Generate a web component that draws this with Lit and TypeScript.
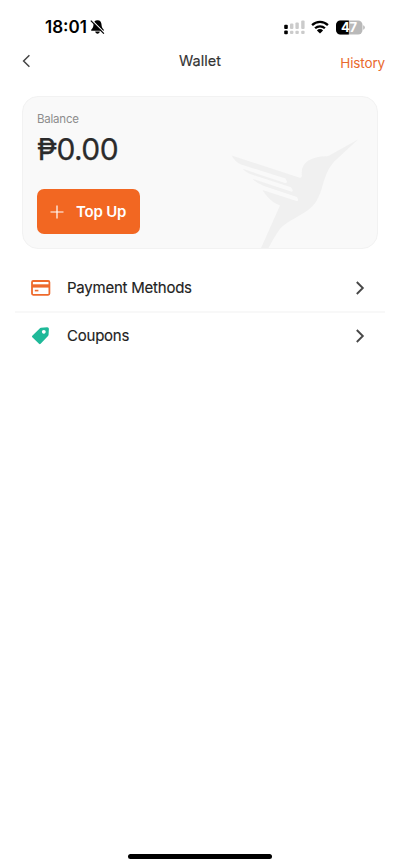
import { LitElement, html, css, svg } from "lit";
import { customElement, property } from "lit/decorators.js";

const cardIcon = svg`<svg width="20" height="16" viewBox="0 0 20 16">
  <rect x="1" y="1" width="17.4" height="13.8" rx="1.2" fill="none" stroke="#ee6a2c" stroke-width="1.8"/>
  <path d="M1 4.3H18.4V7.6H1Z" fill="#ee6a2c"/>
  <path d="M3.8 10.6H7.4" stroke="#ee6a2c" stroke-width="1.6"/>
</svg>`;

const tagIcon = svg`<svg width="20" height="18" viewBox="0 0 20 18">
  <path fill-rule="evenodd" fill="#1fb999" d="M10 .7 L16.2 .2 Q17.9 .2 17.9 1.8 L17.6 7.6 Q17.5 8.6 16.8 9.3 L9.6 16.8 Q8.8 17.5 8 16.8 L1.3 10.3 Q.5 9.5 1.3 8.7 L8.7 1.4 Q9.2 .8 10 .7Z M12.8 2.9 a1.9 1.9 0 1 0 .01 0Z"/>
</svg>`;

@customElement("status-bar")
class StatusBar extends LitElement {
  static styles = css`
    :host { display: flex; height: 44px; align-items: center; justify-content: space-between; padding: 10px 34px 0 45px; box-sizing: border-box; color: #000; }
    .left, .right { display: flex; align-items: center; }
    .time { font: 600 17px/20px Inter, sans-serif; letter-spacing: 0; width: 43px; white-space: nowrap; }
    .bell { margin-left: 2px; }
    .right { gap: 6px; }
    svg { display: block; }
    .level { font: 700 13px Inter, sans-serif; letter-spacing: -0.3px; }
  `;
  render() {
    return html`
      <div class="left">
        <span class="time">18:01</span>
        <svg class="bell" width="15" height="16" viewBox="0 0 15 16">
          <path d="M7.5 1.2C4.7 1.2 3.6 3.3 3.5 5.6C3.4 8.4 2.4 9.5 1.2 10.7V11.8H13.8V10.7C12.6 9.5 11.6 8.4 11.5 5.6C11.4 3.3 10.3 1.2 7.5 1.2Z" fill="#000"/>
          <path d="M5.2 12.6H9.8C9.5 14 8.7 14.7 7.5 14.7S5.5 14 5.2 12.6Z" fill="#000"/>
          <path d="M1.6 1L14.7 14" stroke="#fff" stroke-width="1.3"/>
          <path d="M.8 1.6L13.9 14.6" stroke="#000" stroke-width="1.2"/>
        </svg>
      </div>
      <div class="right">
        <svg width="21" height="15" viewBox="0 0 21 15">
          <g fill="#cbcbcb">
            <rect x="6" y="3.6" width="3.4" height="5.4" rx="1"/>
            <rect x="11.4" y="2.4" width="3.4" height="6.6" rx="1"/>
            <rect x="17.2" y=".6" width="3.4" height="8.4" rx="1"/>
            <rect x="6" y="10.8" width="3.4" height="3.2" rx="1"/>
            <rect x="11.4" y="10.8" width="3.4" height="3.2" rx="1"/>
            <rect x="17.2" y="10.8" width="3.4" height="3.2" rx="1"/>
          </g>
          <rect x=".2" y="4.8" width="3.6" height="4.2" rx="1"/>
          <rect x=".2" y="10.6" width="3.6" height="3.6" rx="1"/>
        </svg>
        <svg width="18" height="14" viewBox="0 0 18 14">
          <g fill="none" stroke="#000" stroke-width="2.3">
            <path d="M1.1 5.1A11.3 11.3 0 0 1 16.9 5.1"/>
            <path d="M4.1 8.3A7 7 0 0 1 13.9 8.3"/>
          </g>
          <path d="M9 13.5L5.9 10.4A4.4 4.4 0 0 1 12.1 10.4Z"/>
        </svg>
        <svg width="31" height="15" viewBox="0 0 31 15">
          <rect x="1" y=".5" width="26.5" height="14" rx="4.4" fill="#b9b9b9"/>
          <path d="M13.8 .5H5.4A4.4 4.4 0 0 0 1 4.9V10.1A4.4 4.4 0 0 0 5.4 14.5H13.8Z" fill="#000"/>
          <path d="M28.2 5.2Q29.8 5.8 29.8 7.5T28.2 9.8Z" fill="#b9b9b9"/>
          <text class="level" x="14" y="12.2" text-anchor="middle" fill="#fff">47</text>
        </svg>
      </div>`;
  }
}

@customElement("balance-card")
class BalanceCard extends LitElement {
  static styles = css`
    :host { display: block; position: relative; box-sizing: border-box; height: 153px; margin: 17px 22px 0; border: 1px solid #f2f2f2; border-radius: 16px; background: #f9f9f9; overflow: hidden; padding: 14px; }
    .bird { position: absolute; right: 0; bottom: 0; }
    .label { font: 400 11.5px/16px Inter, sans-serif; color: #8d8d8d; letter-spacing: -0.22px; }
    .amount { font: 400 30px/36px Inter, sans-serif; letter-spacing: -0.55px; color: #2b2b2b; -webkit-text-stroke: 0.25px #2b2b2b; margin-top: 4px; white-space: nowrap; }
    .topup { display: flex; align-items: center; box-sizing: border-box; width: 103px; height: 45px; margin-top: 22px; padding: 0 0 0 13px; border: 0; border-radius: 7px; background: #f26722; color: #fff; font: 600 15px/20px Inter, sans-serif; letter-spacing: -0.2px; gap: 12px; white-space: nowrap; }
  `;
  render() {
    return html`
      <svg class="bird" width="154" height="151" viewBox="223 97 154 151">
        <path fill="#f0f0f0" d="M231.7 155.5L299 177.4Q302.2 178.4 301.8 175C300.6 163.5 309 156.6 327 156.3Q329 156.1 331 154.6L358 139.4L334 161.7C328.5 168 326 174.5 323 184C319.5 198 315 205 307.5 210.5C296 218.5 284.5 222 278.5 231Q273 239 268.5 248H261L280 205.5C272 202.5 266.5 196.5 262.5 190L296.5 201Q299.5 201.5 297 197L264 186Q256.5 183.4 252.5 178.8L291 191.6Q294.5 192.2 291 187.2L253 175Q246 172.5 242.5 168.8L285 183Q288.5 183.8 285.5 178.6L241 164.4Q234.5 161.5 231.7 155.5Z"/>
      </svg>
      <div class="label">Balance</div>
      <div class="amount">₱0.00</div>
      <button class="topup">
        <svg width="14" height="14" viewBox="0 0 14 14"><path d="M7 .5V13.5M.5 7H13.5" stroke="#fff" stroke-width="1.2"/></svg>
        <span>Top Up</span>
      </button>`;
  }
}

@customElement("wallet-row")
class WalletRow extends LitElement {
  @property() label = "";
  @property({ attribute: false }) icon: unknown;
  static styles = css`
    :host { display: flex; align-items: center; height: 47px; padding: 0 20px 0 16px; }
    .icon { display: flex; width: 20px; margin-right: 16px; }
    .label { flex: 1; font: 400 15px/20px Inter, sans-serif; letter-spacing: -0.23px; color: #222; -webkit-text-stroke: 0.15px #222; }
    svg { display: block; }
  `;
  render() {
    return html`<span class="icon">${this.icon}</span><span class="label">${this.label}</span>
      <svg width="10" height="14" viewBox="0 0 10 14"><path d="M1.8 1L7.8 7L1.8 13" fill="none" stroke="#484848" stroke-width="1.9"/></svg>`;
  }
}

@customElement("app-root")
class AppRoot extends LitElement {
  static styles = css`
    :host { display: flex; flex-direction: column; height: 866px; background: #fff; overflow: hidden; }
    .nav { display: grid; grid-template-columns: 1fr auto 1fr; align-items: center; height: 35px; padding: 0 15px 0 22px; font-family: Inter, sans-serif; }
    .back { margin-top: -1px; }
    .title { font-size: 14.5px; font-weight: 400; -webkit-text-stroke: 0.15px #333; line-height: 20px; color: #333; margin: -1px 7px 0 0; }
    .history { justify-self: end; font-size: 13.5px; font-weight: 400; letter-spacing: -0.15px; color: #e9692d; margin-top: 2px; }
    .list { margin: 15px 15px 0; }
    .divider { height: 2px; margin-bottom: -1px; background: #f8f8f8; }
    .home { width: 144px; height: 5px; border-radius: 3px; background: #000; margin: auto auto 7px; }
    svg { display: block; }
  `;
  render() {
    return html`
      <status-bar></status-bar>
      <div class="nav">
        <svg class="back" width="10" height="14" viewBox="0 0 10 14"><path d="M7.4 1.3L1.6 7L7.4 12.7" fill="none" stroke="#444" stroke-width="1.5"/></svg>
        <span class="title">Wallet</span>
        <span class="history">History</span>
      </div>
      <balance-card></balance-card>
      <div class="list">
        <wallet-row label="Payment Methods" .icon=${cardIcon}></wallet-row>
        <div class="divider"></div>
        <wallet-row label="Coupons" .icon=${tagIcon}></wallet-row>
      </div>
      <div class="home"></div>`;
  }
}
